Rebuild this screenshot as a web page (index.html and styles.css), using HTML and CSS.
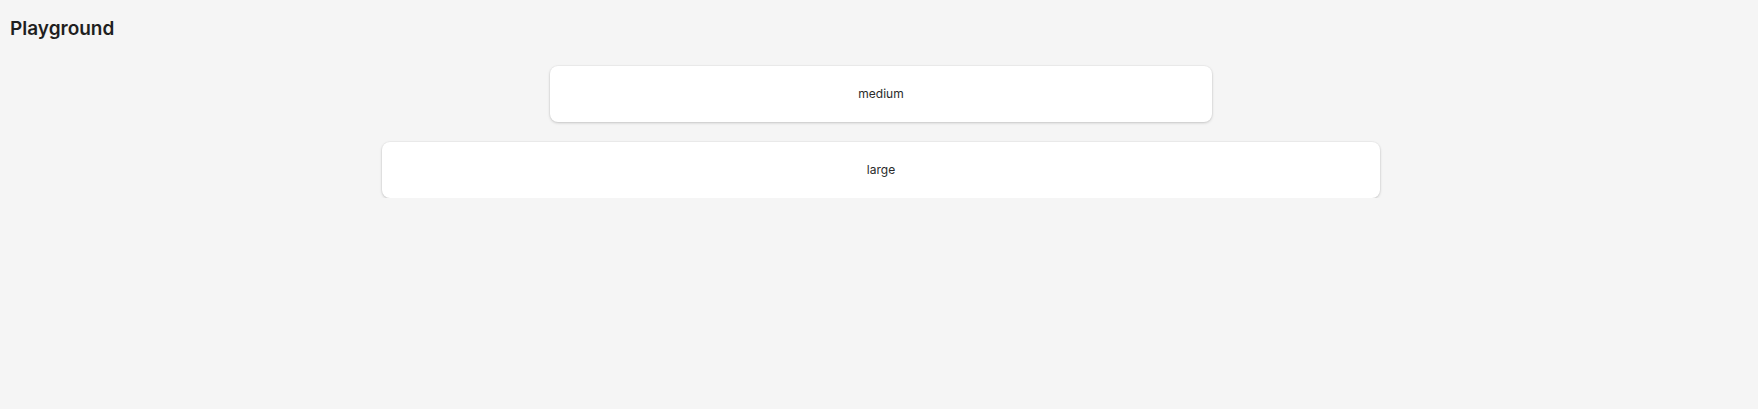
FILE: index.html
```html
<!DOCTYPE html>
<html lang="en">
<head>
<meta charset="utf-8">
<title>Playground</title>
<link rel="stylesheet" href="styles.css">
</head>
<body>
<header class="page-header">
  <h1 class="page-title">Playground</h1>
</header>
<main class="stack">
  <div class="card card-medium">medium</div>
  <div class="card card-large">large</div>
</main>
</body>
</html>
```
FILE: styles.css
```css
html, body {
  margin: 0;
  padding: 0;
  background: #f5f5f5;
  font-family: Inter, "Noto Sans", "Liberation Sans", sans-serif;
  color: #222;
}

.page-header {
  padding: 17px 10px 0 10px;
}

.page-title {
  margin: 0;
  font-size: 19px;
  line-height: 24px;
  font-weight: 600;
  color: #1f1f1f;
}

.stack {
  display: flex;
  flex-direction: column;
  align-items: center;
  gap: 20px;
  padding: 25px 0 0 4px;
}

.card {
  box-sizing: border-box;
  height: 56px;
  display: flex;
  align-items: center;
  justify-content: center;
  padding-bottom: 1px;
  background: #ffffff;
  border-radius: 8px;
  box-shadow: 0 0 0 1px rgba(0, 0, 0, 0.025), 0 1px 3px rgba(0, 0, 0, 0.18);
  font-size: 12px;
  color: #2a2a2a;
}

.card-medium {
  width: 662px;
}

.card-large {
  width: 998px;
}
```
